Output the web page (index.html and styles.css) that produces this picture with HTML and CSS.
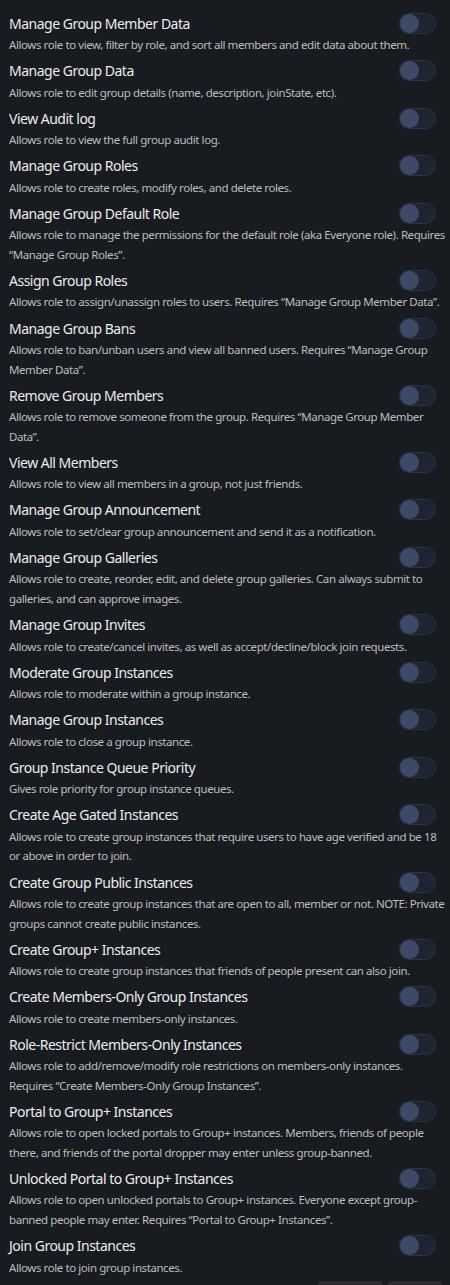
FILE: index.html
```html
<!DOCTYPE html>
<html>
<head>
<meta charset="utf-8">
<link rel="stylesheet" href="styles.css">
</head>
<body>
<div class="list">
  <div class="item"><div class="row"><span class="title">Manage Group Member Data</span><span class="toggle"><span class="knob"></span></span></div><p class="desc">Allows role to view, filter by role, and sort all members and edit data about them.</p></div>
  <div class="item"><div class="row"><span class="title">Manage Group Data</span><span class="toggle"><span class="knob"></span></span></div><p class="desc">Allows role to edit group details (name, description, joinState, etc).</p></div>
  <div class="item"><div class="row"><span class="title">View Audit log</span><span class="toggle"><span class="knob"></span></span></div><p class="desc">Allows role to view the full group audit log.</p></div>
  <div class="item"><div class="row"><span class="title">Manage Group Roles</span><span class="toggle"><span class="knob"></span></span></div><p class="desc">Allows role to create roles, modify roles, and delete roles.</p></div>
  <div class="item"><div class="row"><span class="title">Manage Group Default Role</span><span class="toggle"><span class="knob"></span></span></div><p class="desc">Allows role to manage the permissions for the default role (aka Everyone role). Requires “Manage Group Roles”.</p></div>
  <div class="item"><div class="row"><span class="title">Assign Group Roles</span><span class="toggle"><span class="knob"></span></span></div><p class="desc">Allows role to assign/unassign roles to users. Requires “Manage Group Member Data”.</p></div>
  <div class="item"><div class="row"><span class="title">Manage Group Bans</span><span class="toggle"><span class="knob"></span></span></div><p class="desc">Allows role to ban/unban users and view all banned users. Requires “Manage Group Member Data”.</p></div>
  <div class="item"><div class="row"><span class="title">Remove Group Members</span><span class="toggle"><span class="knob"></span></span></div><p class="desc">Allows role to remove someone from the group. Requires “Manage Group Member Data”.</p></div>
  <div class="item"><div class="row"><span class="title">View All Members</span><span class="toggle"><span class="knob"></span></span></div><p class="desc">Allows role to view all members in a group, not just friends.</p></div>
  <div class="item"><div class="row"><span class="title">Manage Group Announcement</span><span class="toggle"><span class="knob"></span></span></div><p class="desc">Allows role to set/clear group announcement and send it as a notification.</p></div>
  <div class="item"><div class="row"><span class="title">Manage Group Galleries</span><span class="toggle"><span class="knob"></span></span></div><p class="desc">Allows role to create, reorder, edit, and delete group galleries. Can always submit to galleries, and can approve images.</p></div>
  <div class="item"><div class="row"><span class="title">Manage Group Invites</span><span class="toggle"><span class="knob"></span></span></div><p class="desc">Allows role to create/cancel invites, as well as accept/decline/block join requests.</p></div>
  <div class="item"><div class="row"><span class="title">Moderate Group Instances</span><span class="toggle"><span class="knob"></span></span></div><p class="desc">Allows role to moderate within a group instance.</p></div>
  <div class="item"><div class="row"><span class="title">Manage Group Instances</span><span class="toggle"><span class="knob"></span></span></div><p class="desc">Allows role to close a group instance.</p></div>
  <div class="item"><div class="row"><span class="title">Group Instance Queue Priority</span><span class="toggle"><span class="knob"></span></span></div><p class="desc">Gives role priority for group instance queues.</p></div>
  <div class="item"><div class="row"><span class="title">Create Age Gated Instances</span><span class="toggle"><span class="knob"></span></span></div><p class="desc">Allows role to create group instances that require users to have age verified and be 18 or above in order to join.</p></div>
  <div class="item"><div class="row"><span class="title">Create Group Public Instances</span><span class="toggle"><span class="knob"></span></span></div><p class="desc">Allows role to create group instances that are open to all, member or not. NOTE: Private groups cannot create public instances.</p></div>
  <div class="item"><div class="row"><span class="title">Create Group+ Instances</span><span class="toggle"><span class="knob"></span></span></div><p class="desc">Allows role to create group instances that friends of people present can also join.</p></div>
  <div class="item"><div class="row"><span class="title">Create Members-Only Group Instances</span><span class="toggle"><span class="knob"></span></span></div><p class="desc">Allows role to create members-only instances.</p></div>
  <div class="item"><div class="row"><span class="title">Role-Restrict Members-Only Instances</span><span class="toggle"><span class="knob"></span></span></div><p class="desc">Allows role to add/remove/modify role restrictions on members-only instances. Requires “Create Members-Only Group Instances”.</p></div>
  <div class="item"><div class="row"><span class="title">Portal to Group+ Instances</span><span class="toggle"><span class="knob"></span></span></div><p class="desc">Allows role to open locked portals to Group+ instances. Members, friends of people there, and friends of the portal dropper may enter unless group-banned.</p></div>
  <div class="item"><div class="row"><span class="title">Unlocked Portal to Group+ Instances</span><span class="toggle"><span class="knob"></span></span></div><p class="desc">Allows role to open unlocked portals to Group+ instances. Everyone except group-banned people may enter. Requires “Portal to Group+ Instances”.</p></div>
  <div class="item"><div class="row"><span class="title">Join Group Instances</span><span class="toggle"><span class="knob"></span></span></div><p class="desc">Allows role to join group instances.</p></div>
</div>
<div class="actions">
  <span class="btn btn-a"></span>
  <span class="btn btn-b"></span>
</div>
</body>
</html>
```

FILE: styles.css
```css
html, body {
  margin: 0;
  padding: 0;
  background: #181b20;
}
body {
  font-family: "Noto Sans", "Open Sans", sans-serif;
  color: #e6e6e6;
  height: 1285px;
  overflow: hidden;
}
.list {
  padding: 11px 4px 0 9px;
}
.item {
  margin-bottom: 4.1px;
}
.row {
  display: flex;
  align-items: center;
  justify-content: space-between;
  height: 24px;
  padding-right: 10px;
}
.title {
  font-size: 14px;
  letter-spacing: -0.5px;
  color: #ececec;
  white-space: nowrap;
}
.desc {
  margin: 0;
  font-size: 11.5px;
  letter-spacing: -0.42px;
  line-height: 19.5px;
  color: #bdbdbd;
}
.toggle {
  flex: none;
  width: 35px;
  height: 19px;
  border-radius: 11px;
  background: #1e2430;
  border: 1px solid #2b3547;
  position: relative;
}
.knob {
  position: absolute;
  left: 0;
  top: 0;
  width: 19px;
  height: 19px;
  border-radius: 50%;
  background: #3d4966;
}
.actions {
  display: flex;
  justify-content: flex-end;
  gap: 5px;
  padding: 0 8px 0 0;
  margin-top: 1px;
}
.btn {
  display: block;
  height: 20px;
  border-radius: 4px;
  background: #2c2d31;
}
.btn-a { width: 65px; }
.btn-b { width: 54px; }
```
